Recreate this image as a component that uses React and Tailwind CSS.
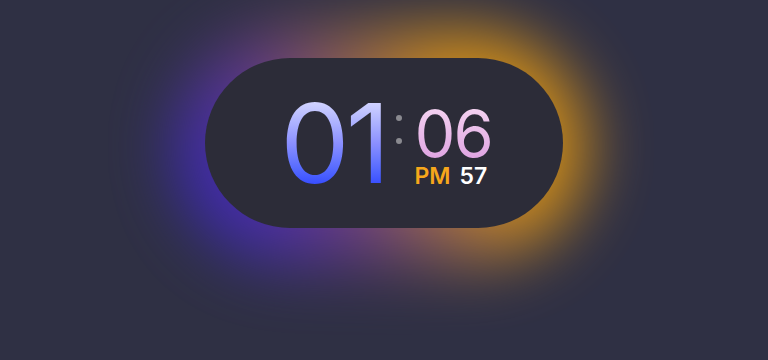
import React from 'react';

const App = () => {
  return (
    <div className="w-[768px] h-[360px] bg-[#2f3044] flex justify-center pt-[58px] overflow-hidden" style={{ fontFamily: 'Inter, "Open Sans", sans-serif' }}>
      <div className="relative w-[358px] h-[170px]">
        {/* glow behind the pill */}
        <div className="absolute -left-[30px] -right-[24px] -top-[28px] -bottom-[36px] rounded-full bg-[linear-gradient(60deg,#3a26d0_12%,#6e3c8e_36%,#a8704e_54%,#f0a010_70%)] blur-[32px] opacity-85" />
        <div className="relative h-full rounded-full bg-[#2c2c38] flex items-center justify-center gap-[10px] pl-[4px]">
          <span className="text-[110px] font-normal leading-none tracking-[-4px] bg-gradient-to-b from-[#eceaff] via-[#8c90ff] to-[#2226ff] bg-clip-text text-transparent">
            01
          </span>
          <div className="flex flex-col gap-[17px] -mt-[28px]">
            <span className="w-[6px] h-[6px] rounded-full bg-[#8a8a90]" />
            <span className="w-[6px] h-[6px] rounded-full bg-[#8a8a90]" />
          </div>
          <div className="flex flex-col mt-[2px] ml-[2px]">
            <span className="text-[65px] font-normal leading-none tracking-[-2px] bg-gradient-to-b from-[#f6d8f2] to-[#dc9ee0] bg-clip-text text-transparent">
              06
            </span>
            <div className="flex gap-[9px] -mt-[1px] text-[23px] font-semibold leading-none">
              <span className="text-[#f6a71b]">PM</span>
              <span className="text-white">57</span>
            </div>
          </div>
        </div>
      </div>
    </div>
  );
};

export default App;
